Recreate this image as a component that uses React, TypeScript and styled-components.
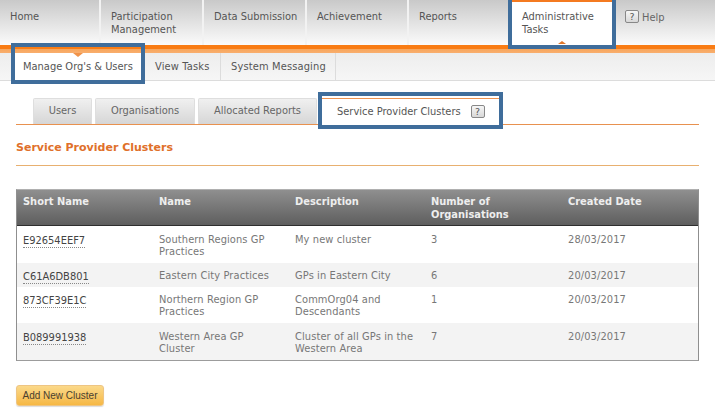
import React from "react";
import styled, { createGlobalStyle } from "styled-components";

const Global = createGlobalStyle`
  html, body { margin: 0; padding: 0; background: #fff; }
  body { font-family: "DejaVu Sans", Verdana, sans-serif; font-size: 9.9px; color: #5f5f5f; }
`;

const Page = styled.div`
  width: 715px;
  height: 417px;
  overflow: hidden;
  position: relative;
`;

const TopNav = styled.nav`
  height: 45px;
  display: flex;
  background: linear-gradient(#c9c9c9, #fbfbfb);
`;

const TopItem = styled.a<{ $w: number; $last?: boolean }>`
  width: ${(p) => p.$w}px;
  box-sizing: border-box;
  padding: 10px 0 0 10px;
  line-height: 13px;
  color: #555;
  border-right: ${(p) => (p.$last ? "0" : "2px solid #f2f2f2")};
  flex: none;
`;

const ActiveTop = styled.a`
  width: 100px;
  margin-left: 1px;
  box-sizing: border-box;
  flex: none;
  background: #fff;
  border-top: 2px solid #f47a20;
  padding: 8px 8px 0 10px;
  line-height: 13px;
  color: #555;
  position: relative;
  &::before {
    content: "";
    position: absolute;
    left: -4px;
    right: -4px;
    top: -2px;
    bottom: -4px;
    border: 4px solid #3f6d9b;
    border-top: 0;
  }
  &::after {
    content: "";
    position: absolute;
    left: 46px;
    bottom: 1px;
    border: 4px solid transparent;
    border-top: 0;
    border-bottom: 3px solid #e0762a;
  }
`;

const Help = styled.div`
  margin-left: 13px;
  padding-top: 10px;
  display: flex;
  gap: 3px;
  align-items: flex-start;
  line-height: 15px;
  color: #666;
`;

const Q = styled.span`
  width: 14px;
  height: 13px;
  box-sizing: border-box;
  border: 1px solid #888;
  border-radius: 2px;
  background: linear-gradient(#f6f6f6, #d8d8d8);
  font-size: 9.5px;
  line-height: 11px;
  text-align: center;
  color: #555;
  flex: none;
`;

const OrangeBar = styled.div`
  height: 8px;
  background: linear-gradient(#f97c14 0 4px, #f7a65c 4px, #f9ae6e);
`;

const SubNav = styled.nav`
  height: 28px;
  box-sizing: border-box;
  display: flex;
  padding-left: 15px;
  background: linear-gradient(#ededed, #f6f6f6);
  border-bottom: 1px solid #dcdcdc;
`;

const SubItem = styled.a<{ $w: number }>`
  width: ${(p) => p.$w}px;
  box-sizing: border-box;
  padding-left: 10px;
  line-height: 27px;
  letter-spacing: 0.15px;
  color: #555;
  border-right: 1px solid #dcdcdc;
`;

const ActiveSub = styled.a`
  width: 126px;
  box-sizing: border-box;
  margin-right: 4px;
  background: #fff;
  line-height: 27px;
  padding-left: 8px;
  color: #555;
  position: relative;
  white-space: nowrap;
  &::before {
    content: "";
    position: absolute;
    left: -4px;
    right: -4px;
    top: -10px;
    bottom: -4px;
    border: 4px solid #3f6d9b;
  }
  &::after {
    content: "";
    position: absolute;
    left: 58px;
    top: 0;
    border: 5px solid transparent;
    border-bottom: 0;
    border-top: 4px solid #f0934a;
  }
`;

const Content = styled.main`
  padding: 17px 16px 0;
`;

const Tabs = styled.div`
  display: flex;
  gap: 3px;
  padding-left: 17px;
  height: 26px;
  border-bottom: 1px solid #e8914f;
`;

const Tab = styled.a<{ $w: number }>`
  box-sizing: border-box;
  width: ${(p) => p.$w}px;
  height: 26px;
  line-height: 23px;
  text-align: center;
  background: linear-gradient(#f0f0f0, #d6d6d6);
  border: 1px solid #dedede;
  border-bottom: 0;
  color: #666;
  border-radius: 2px 2px 0 0;
`;

const ActiveTab = styled.a`
  box-sizing: border-box;
  width: 177px;
  height: 27px;
  margin-left: 2px;
  padding: 0 0 2px 15px;
  display: flex;
  align-items: center;
  gap: 10px;
  background: #fff;
  border-top: 1px solid #ee9350;
  color: #555;
  position: relative;
  white-space: nowrap;
  &::before {
    content: "";
    position: absolute;
    left: -4px;
    right: -4px;
    top: -7px;
    bottom: -4px;
    border: 4px solid #3f6d9b;
  }
`;

const Heading = styled.h2`
  margin: 16px 0 0;
  height: 24px;
  font-size: 11px;
  line-height: 14px;
  font-weight: bold;
  color: #e0702a;
  border-bottom: 1px solid #e8b070;
`;

const Grid = styled.div`
  margin-top: 23px;
  border: 1px solid #8f8f8f;
  border-top-color: #b0b0b0;
  border-bottom-color: #9c9c9c;
  box-sizing: border-box;
`;

const Row = styled.div<{ $alt?: boolean; $h: number; $top: number }>`
  display: grid;
  grid-template-columns: 136px 136px 136px 137px 1fr;
  height: ${(p) => p.$h}px;
  padding: ${(p) => p.$top}px 0 0 6px;
  box-sizing: border-box;
  line-height: 12px;
  letter-spacing: 0.1px;
  background: ${(p) => (p.$alt ? "#f3f3f3" : "#fff")};
  color: #777;
`;

const HeadRow = styled.div`
  display: grid;
  grid-template-columns: 136px 136px 136px 137px 1fr;
  height: 36px;
  padding: 5px 0 0 6px;
  box-sizing: border-box;
  line-height: 13px;
  background: linear-gradient(#8f8f8f, #5e5e5e);
  border-bottom: 1px solid #2e2e2e;
  color: #eee;
  font-weight: bold;
`;

const HeadCell = styled.span`
  padding-right: 20px;
`;

const Code = styled.a`
  color: #444;
  border-bottom: 1px dotted #888;
  justify-self: start;
  line-height: 13px;
  height: 13px;
  letter-spacing: 0;
`;

const Cell = styled.span`
  padding-right: 14px;
`;

const AddButton = styled.button`
  display: block;
  margin-top: 24px;
  width: 88px;
  height: 21px;
  padding: 0;
  font-family: "Liberation Sans", Arial, sans-serif;
  font-size: 10px;
  color: #4a4030;
  background: linear-gradient(#fbd98a, #f6b845);
  border: 1px solid #eec583;
  border-radius: 3px;
  box-shadow: 0 1px 1px #ddd;
`;

const rows = [
  { h: 37, top: 8, code: "E92654EEF7", name: "Southern Regions GP Practices", desc: "My new cluster", n: "3", date: "28/03/2017" },
  { h: 24, top: 7, alt: true, code: "C61A6DB801", name: "Eastern City Practices", desc: "GPs in Eastern City", n: "6", date: "20/03/2017" },
  { h: 36, top: 7, code: "873CF39E1C", name: "Northern Region GP Practices", desc: "CommOrg04 and Descendants", n: "1", date: "20/03/2017" },
  { h: 37, top: 8, alt: true, code: "B089991938", name: "Western Area GP Cluster", desc: "Cluster of all GPs in the Western Area", n: "7", date: "20/03/2017" },
];

export default function App() {
  return (
    <Page>
      <Global />
      <TopNav>
        <TopItem $w={101}>Home</TopItem>
        <TopItem $w={103}>Participation Management</TopItem>
        <TopItem $w={103}>Data Submission</TopItem>
        <TopItem $w={102}>Achievement</TopItem>
        <TopItem $w={102} $last>Reports</TopItem>
        <ActiveTop>Administrative Tasks</ActiveTop>
        <Help><Q>?</Q>Help</Help>
      </TopNav>
      <OrangeBar />
      <SubNav>
        <ActiveSub>Manage Org's &amp; Users</ActiveSub>
        <SubItem $w={76}>View Tasks</SubItem>
        <SubItem $w={115}>System Messaging</SubItem>
      </SubNav>
      <Content>
        <Tabs>
          <Tab $w={59}>Users</Tab>
          <Tab $w={100}>Organisations</Tab>
          <Tab $w={119}>Allocated Reports</Tab>
          <ActiveTab>Service Provider Clusters <Q>?</Q></ActiveTab>
        </Tabs>
        <Heading>Service Provider Clusters</Heading>
        <Grid>
          <HeadRow>
            <HeadCell>Short Name</HeadCell>
            <HeadCell>Name</HeadCell>
            <HeadCell>Description</HeadCell>
            <HeadCell>Number of Organisations</HeadCell>
            <HeadCell>Created Date</HeadCell>
          </HeadRow>
          {rows.map((r) => (
            <Row key={r.code} $alt={r.alt} $h={r.h} $top={r.top}>
              <Code>{r.code}</Code>
              <Cell>{r.name}</Cell>
              <Cell>{r.desc}</Cell>
              <span>{r.n}</span>
              <span>{r.date}</span>
            </Row>
          ))}
        </Grid>
        <AddButton>Add New Cluster</AddButton>
      </Content>
    </Page>
  );
}
